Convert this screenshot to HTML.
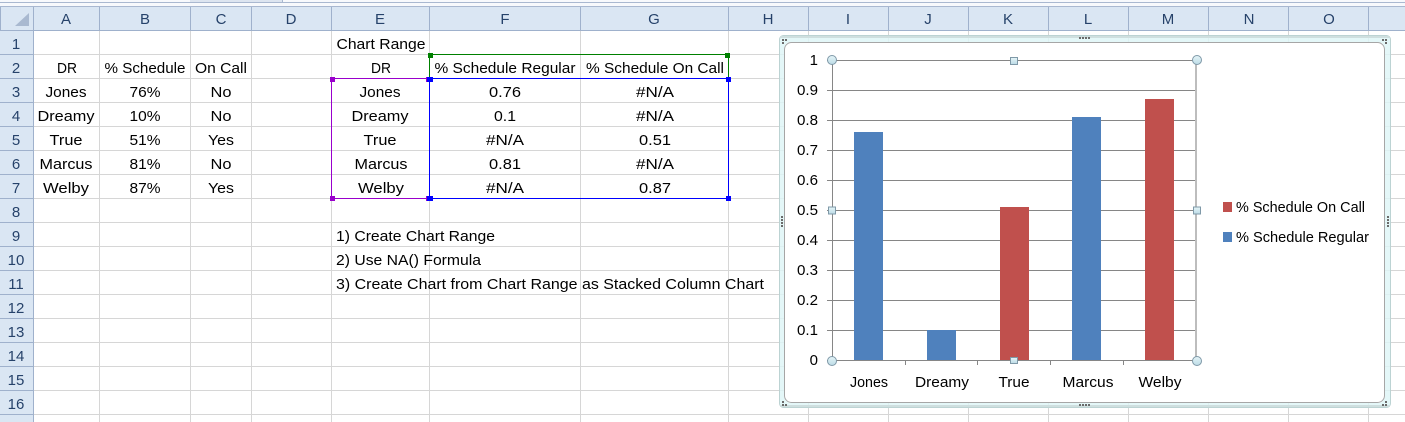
<!DOCTYPE html>
<html><head><meta charset="utf-8"><style>
html,body{margin:0;padding:0;background:#fff;width:1405px;height:422px;overflow:hidden}
svg{display:block;position:absolute;left:0;top:0}
text{font-family:"Liberation Sans",sans-serif;font-size:15px;fill:#000;text-anchor:middle}
.h text{fill:#26426a}
.r text{text-anchor:end}
.l text{text-anchor:start}
</style></head><body>
<svg width="1405" height="422" viewBox="0 0 1405 422">
<defs><linearGradient id="hg" x1="0" y1="0" x2="0" y2="1"><stop offset="0" stop-color="#e6f5f8"/><stop offset="1" stop-color="#bcdbe6"/></linearGradient></defs>
<rect width="1405" height="422" fill="#fff"/>
<!-- top strip -->
<rect x="0" y="0" width="1405" height="6" fill="#f7f9fc"/>
<rect x="0" y="2" width="1405" height="1" fill="#a9b8d0"/>
<rect x="190" y="0" width="92" height="2" fill="#dde5f0"/>
<rect x="282" y="0" width="1" height="3" fill="#a9b8d0"/>
<rect x="0" y="6" width="1405" height="1" fill="#a9b8d0"/>
<!-- headers -->
<rect x="0" y="7" width="1405" height="23" fill="#dae6f3"/>
<rect x="0" y="30" width="33" height="392" fill="#dae6f3"/>
<path d="M29 13V26H15Z" fill="#a9b9d0"/>
<!-- grid -->
<g fill="#d6d6d6">
<rect x="99" y="30" width="1" height="392"/><rect x="190" y="30" width="1" height="392"/><rect x="251" y="30" width="1" height="392"/><rect x="331" y="30" width="1" height="392"/><rect x="429" y="30" width="1" height="392"/><rect x="580" y="30" width="1" height="392"/><rect x="728" y="30" width="1" height="392"/><rect x="808" y="30" width="1" height="392"/><rect x="888" y="30" width="1" height="392"/><rect x="968" y="30" width="1" height="392"/><rect x="1048" y="30" width="1" height="392"/><rect x="1128" y="30" width="1" height="392"/><rect x="1208" y="30" width="1" height="392"/><rect x="1288" y="30" width="1" height="392"/><rect x="1368" y="30" width="1" height="392"/>
<rect x="33" y="54" width="1372" height="1"/><rect x="33" y="78" width="1372" height="1"/><rect x="33" y="102" width="1372" height="1"/><rect x="33" y="126" width="1372" height="1"/><rect x="33" y="150" width="1372" height="1"/><rect x="33" y="174" width="1372" height="1"/><rect x="33" y="198" width="1372" height="1"/><rect x="33" y="222" width="1372" height="1"/><rect x="33" y="246" width="1372" height="1"/><rect x="33" y="270" width="1372" height="1"/><rect x="33" y="294" width="1372" height="1"/><rect x="33" y="318" width="1372" height="1"/><rect x="33" y="342" width="1372" height="1"/><rect x="33" y="366" width="1372" height="1"/><rect x="33" y="390" width="1372" height="1"/><rect x="33" y="414" width="1372" height="1"/>
</g>
<!-- header separators -->
<g fill="#9fb1cc">
<rect x="0" y="30" width="1405" height="1"/>
<rect x="0" y="7" width="1" height="23"/>
<rect x="33" y="7" width="1" height="415"/>
<rect x="99" y="7" width="1" height="23"/><rect x="190" y="7" width="1" height="23"/><rect x="251" y="7" width="1" height="23"/><rect x="331" y="7" width="1" height="23"/><rect x="429" y="7" width="1" height="23"/><rect x="580" y="7" width="1" height="23"/><rect x="728" y="7" width="1" height="23"/><rect x="808" y="7" width="1" height="23"/><rect x="888" y="7" width="1" height="23"/><rect x="968" y="7" width="1" height="23"/><rect x="1048" y="7" width="1" height="23"/><rect x="1128" y="7" width="1" height="23"/><rect x="1208" y="7" width="1" height="23"/><rect x="1288" y="7" width="1" height="23"/><rect x="1368" y="7" width="1" height="23"/>
<rect x="0" y="54" width="33" height="1"/><rect x="0" y="78" width="33" height="1"/><rect x="0" y="102" width="33" height="1"/><rect x="0" y="126" width="33" height="1"/><rect x="0" y="150" width="33" height="1"/><rect x="0" y="174" width="33" height="1"/><rect x="0" y="198" width="33" height="1"/><rect x="0" y="222" width="33" height="1"/><rect x="0" y="246" width="33" height="1"/><rect x="0" y="270" width="33" height="1"/><rect x="0" y="294" width="33" height="1"/><rect x="0" y="318" width="33" height="1"/><rect x="0" y="342" width="33" height="1"/><rect x="0" y="366" width="33" height="1"/><rect x="0" y="390" width="33" height="1"/><rect x="0" y="414" width="33" height="1"/>
</g>
<g class="h">
<text x="66" y="24">A</text><text x="145" y="24">B</text><text x="221" y="24">C</text><text x="291" y="24">D</text><text x="380" y="24">E</text><text x="505" y="24">F</text><text x="654" y="24">G</text><text x="768" y="24">H</text><text x="848" y="24">I</text><text x="928" y="24">J</text><text x="1008" y="24">K</text><text x="1088" y="24">L</text><text x="1168" y="24">M</text><text x="1249" y="24">N</text><text x="1329" y="24">O</text>
<text x="16" y="49">1</text><text x="16" y="73">2</text><text x="16" y="97">3</text><text x="16" y="121">4</text><text x="16" y="145">5</text><text x="16" y="169">6</text><text x="16" y="193">7</text><text x="16" y="217">8</text><text x="16" y="241">9</text><text x="16" y="265">10</text><text x="16" y="289">11</text><text x="16" y="313">12</text><text x="16" y="337">13</text><text x="16" y="361">14</text><text x="16" y="385">15</text><text x="16" y="409">16</text>
</g>
<!-- table 1 -->
<text x="67" y="73" textLength="20" lengthAdjust="spacingAndGlyphs">DR</text>
<text x="145" y="73" textLength="81" lengthAdjust="spacingAndGlyphs">% Schedule</text>
<text x="221" y="73" textLength="52" lengthAdjust="spacingAndGlyphs">On Call</text>
<text x="66" y="97" textLength="41" lengthAdjust="spacingAndGlyphs">Jones</text>
<text x="66" y="121" textLength="57" lengthAdjust="spacingAndGlyphs">Dreamy</text>
<text x="66" y="145" textLength="33" lengthAdjust="spacingAndGlyphs">True</text>
<text x="66" y="169" textLength="53" lengthAdjust="spacingAndGlyphs">Marcus</text>
<text x="66" y="193" textLength="46" lengthAdjust="spacingAndGlyphs">Welby</text>
<text x="145" y="97" textLength="31" lengthAdjust="spacingAndGlyphs">76%</text><text x="145" y="121" textLength="31" lengthAdjust="spacingAndGlyphs">10%</text><text x="145" y="145" textLength="31" lengthAdjust="spacingAndGlyphs">51%</text><text x="145" y="169" textLength="31" lengthAdjust="spacingAndGlyphs">81%</text><text x="145" y="193" textLength="31" lengthAdjust="spacingAndGlyphs">87%</text>
<text x="221" y="97" textLength="21" lengthAdjust="spacingAndGlyphs">No</text><text x="221" y="121" textLength="21" lengthAdjust="spacingAndGlyphs">No</text><text x="221" y="145" textLength="26" lengthAdjust="spacingAndGlyphs">Yes</text><text x="221" y="169" textLength="21" lengthAdjust="spacingAndGlyphs">No</text><text x="221" y="193" textLength="26" lengthAdjust="spacingAndGlyphs">Yes</text>
<!-- table 2 -->
<text x="381" y="49" textLength="89" lengthAdjust="spacingAndGlyphs">Chart Range</text>
<text x="381" y="73" textLength="20" lengthAdjust="spacingAndGlyphs">DR</text>
<text x="505" y="73" textLength="141" lengthAdjust="spacingAndGlyphs">% Schedule Regular</text>
<text x="655" y="73" textLength="138" lengthAdjust="spacingAndGlyphs">% Schedule On Call</text>
<text x="380" y="97" textLength="41" lengthAdjust="spacingAndGlyphs">Jones</text>
<text x="380" y="121" textLength="57" lengthAdjust="spacingAndGlyphs">Dreamy</text>
<text x="380" y="145" textLength="33" lengthAdjust="spacingAndGlyphs">True</text>
<text x="381" y="169" textLength="53" lengthAdjust="spacingAndGlyphs">Marcus</text>
<text x="381" y="193" textLength="46" lengthAdjust="spacingAndGlyphs">Welby</text>
<text x="505" y="97" textLength="32" lengthAdjust="spacingAndGlyphs">0.76</text><text x="505" y="121" textLength="22" lengthAdjust="spacingAndGlyphs">0.1</text><text x="505" y="145" textLength="38" lengthAdjust="spacingAndGlyphs">#N/A</text><text x="505" y="169" textLength="32" lengthAdjust="spacingAndGlyphs">0.81</text><text x="505" y="193" textLength="38" lengthAdjust="spacingAndGlyphs">#N/A</text>
<text x="655" y="97" textLength="38" lengthAdjust="spacingAndGlyphs">#N/A</text><text x="655" y="121" textLength="38" lengthAdjust="spacingAndGlyphs">#N/A</text><text x="655" y="145" textLength="32" lengthAdjust="spacingAndGlyphs">0.51</text><text x="655" y="169" textLength="38" lengthAdjust="spacingAndGlyphs">#N/A</text><text x="655" y="193" textLength="32" lengthAdjust="spacingAndGlyphs">0.87</text>
<g class="l">
<text x="336" y="241" textLength="159" lengthAdjust="spacingAndGlyphs">1) Create Chart Range</text>
<text x="336" y="265" textLength="145" lengthAdjust="spacingAndGlyphs">2) Use NA() Formula</text>
<text x="336" y="289" textLength="428" lengthAdjust="spacingAndGlyphs">3) Create Chart from Chart Range as Stacked Column Chart</text>
</g>
<!-- range boxes -->
<rect x="331.5" y="78.5" width="98" height="120" fill="none" stroke="#9900cc"/>
<rect x="429.5" y="54.5" width="299" height="24" fill="none" stroke="#008000"/>
<rect x="429.5" y="78.5" width="299" height="120" fill="none" stroke="#0000ff"/>
<g fill="#9900cc"><rect x="330" y="77" width="5" height="5"/><rect x="330" y="196" width="5" height="5"/><rect x="426" y="77" width="5" height="5"/><rect x="426" y="196" width="5" height="5"/></g>
<g fill="#008000"><rect x="428" y="53" width="5" height="5"/><rect x="725" y="53" width="5" height="5"/></g>
<g fill="#0000ff"><rect x="427" y="77" width="6" height="5"/><rect x="726" y="77" width="5" height="5"/><rect x="427" y="196" width="6" height="5"/><rect x="726" y="196" width="5" height="5"/></g>
<!-- chart frame -->
<rect x="779.5" y="35.5" width="611" height="372" rx="4" fill="#def5f6" fill-opacity=".82" stroke="#bcd3d3"/>
<rect x="780" y="36" width="610" height="2" fill="#cfdfdf"/>
<rect x="780" y="405" width="610" height="2" fill="#cfdfdf"/>
<rect x="784" y="42" width="601" height="361" rx="7" fill="#fff"/>
<rect x="784.5" y="42.5" width="600" height="360" rx="7" fill="none" stroke="#a6a6a6"/>
<g fill="#6b6b6b">
<rect x="782" y="39" width="2" height="2"/><rect x="785" y="39" width="2" height="2"/><rect x="782" y="42" width="2" height="2"/>
<rect x="1382" y="39" width="2" height="2"/><rect x="1385" y="39" width="2" height="2"/><rect x="1385" y="42" width="2" height="2"/>
<rect x="782" y="401" width="2" height="2"/><rect x="782" y="404" width="2" height="2"/><rect x="785" y="404" width="2" height="2"/>
<rect x="1385" y="401" width="2" height="2"/><rect x="1382" y="404" width="2" height="2"/><rect x="1385" y="404" width="2" height="2"/>
<rect x="1079" y="37" width="2" height="2"/><rect x="1082" y="37" width="2" height="2"/><rect x="1085" y="37" width="2" height="2"/><rect x="1088" y="37" width="2" height="2"/>
<rect x="1079" y="404" width="2" height="2"/><rect x="1082" y="404" width="2" height="2"/><rect x="1085" y="404" width="2" height="2"/><rect x="1088" y="404" width="2" height="2"/>
<rect x="781" y="216" width="2" height="2"/><rect x="781" y="219" width="2" height="2"/><rect x="781" y="222" width="2" height="2"/><rect x="781" y="225" width="2" height="2"/>
<rect x="1387" y="216" width="2" height="2"/><rect x="1387" y="219" width="2" height="2"/><rect x="1387" y="222" width="2" height="2"/><rect x="1387" y="225" width="2" height="2"/>
</g>
<!-- gridlines -->
<g fill="#868686">
<rect x="827" y="60" width="369" height="1"/><rect x="827" y="90" width="369" height="1"/><rect x="827" y="120" width="369" height="1"/><rect x="827" y="150" width="369" height="1"/><rect x="827" y="180" width="369" height="1"/><rect x="827" y="210" width="369" height="1"/><rect x="827" y="240" width="369" height="1"/><rect x="827" y="270" width="369" height="1"/><rect x="827" y="300" width="369" height="1"/><rect x="827" y="330" width="369" height="1"/>
</g>
<rect x="1195" y="60" width="2" height="300" fill="#bdbdbd"/>
<!-- bars -->
<rect x="854" y="132" width="29" height="228" fill="#4f81bd"/>
<rect x="927" y="330" width="29" height="30" fill="#4f81bd"/>
<rect x="1000" y="207" width="29" height="153" fill="#c0504d"/>
<rect x="1072" y="117" width="29" height="243" fill="#4f81bd"/>
<rect x="1145" y="99" width="29" height="261" fill="#c0504d"/>
<!-- axes -->
<g fill="#868686">
<rect x="832" y="60" width="1" height="300"/>
<rect x="827" y="360" width="369" height="1"/>
<rect x="905" y="360" width="1" height="5"/><rect x="977" y="360" width="1" height="5"/><rect x="1050" y="360" width="1" height="5"/><rect x="1123" y="360" width="1" height="5"/>
</g>
<!-- handles -->
<g fill="url(#hg)" stroke="#7f99a8">
<circle cx="832" cy="60" r="4.5"/><circle cx="1197" cy="60" r="4.5"/><circle cx="832" cy="361" r="4.5"/><circle cx="1197" cy="361" r="4.5"/>
<rect x="1010.5" y="57.5" width="7" height="7"/><rect x="1010.5" y="357.5" width="7" height="6"/><rect x="828.5" y="207" width="7" height="7"/><rect x="1193.5" y="207" width="7" height="7"/>
</g>
<!-- y labels -->
<g class="r">
<text x="818" y="65">1</text>
<text x="818" y="95" textLength="21" lengthAdjust="spacingAndGlyphs">0.9</text><text x="818" y="125" textLength="21" lengthAdjust="spacingAndGlyphs">0.8</text><text x="818" y="155" textLength="21" lengthAdjust="spacingAndGlyphs">0.7</text><text x="818" y="185" textLength="21" lengthAdjust="spacingAndGlyphs">0.6</text><text x="818" y="215" textLength="21" lengthAdjust="spacingAndGlyphs">0.5</text><text x="818" y="245" textLength="21" lengthAdjust="spacingAndGlyphs">0.4</text><text x="818" y="275" textLength="21" lengthAdjust="spacingAndGlyphs">0.3</text><text x="818" y="305" textLength="21" lengthAdjust="spacingAndGlyphs">0.2</text><text x="818" y="335" textLength="21" lengthAdjust="spacingAndGlyphs">0.1</text>
<text x="818" y="365">0</text>
</g>
<!-- x labels -->
<text x="869" y="387" textLength="38" lengthAdjust="spacingAndGlyphs">Jones</text>
<text x="942" y="387" textLength="54" lengthAdjust="spacingAndGlyphs">Dreamy</text>
<text x="1014" y="387" textLength="31" lengthAdjust="spacingAndGlyphs">True</text>
<text x="1088" y="387" textLength="51" lengthAdjust="spacingAndGlyphs">Marcus</text>
<text x="1160" y="387" textLength="43" lengthAdjust="spacingAndGlyphs">Welby</text>
<!-- legend -->
<rect x="1223" y="202" width="9" height="10" fill="#c0504d"/>
<rect x="1223" y="232" width="9" height="10" fill="#4f81bd"/>
<g class="l">
<text x="1236" y="212" textLength="129" lengthAdjust="spacingAndGlyphs">% Schedule On Call</text>
<text x="1236" y="242" textLength="133" lengthAdjust="spacingAndGlyphs">% Schedule Regular</text>
</g>
</svg>
</body></html>
